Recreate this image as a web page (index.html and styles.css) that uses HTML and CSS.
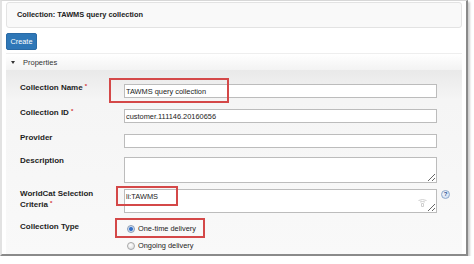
FILE: index.html
```html
<!DOCTYPE html>
<html lang="en">
  <head>
    <meta charset="UTF-8" />
    <meta name="viewport" content="width=device-width, initial-scale=1.0" />
    <title>Collection: TAWMS query collection</title>
    <link rel="stylesheet" href="styles.css">
  </head>
  <body>
    <div class="frame">
      <div class="page-header">Collection: TAWMS query collection</div>
      <button class="btn-create">Create</button>

      <!-- Properties section -->
      <div class="section-title"><span class="caret"></span>Properties</div>
      <div class="section-body">
        <div class="row">
          <label class="field-label">Collection Name<span class="req">*</span></label>
          <input class="field" type="text" value="TAWMS query collection" />
        </div>
        <div class="row">
          <label class="field-label">Collection ID<span class="req">*</span></label>
          <input class="field" type="text" value="customer.111146.20160656" />
        </div>
        <div class="row row-provider">
          <label class="field-label">Provider</label>
          <input class="field" type="text" value="" />
        </div>
        <div class="row row-desc">
          <label class="field-label">Description</label>
          <textarea class="field area-desc"></textarea>
        </div>
        <div class="row row-criteria">
          <label class="field-label">WorldCat Selection<br />Criteria<span class="req">*</span></label>
          <span class="area-wrap">
            <textarea class="field area-criteria">li:TAWMS</textarea>
            <svg class="filter-icon" width="9" height="8" viewBox="0 0 9 8">
              <path d="M0.5 1.5 Q4.5 -0.5 8.5 1.5 M2 3 Q4.5 2 7 3 M3.5 4.5 L3.5 7.5 L5.5 7.5 L5.5 4.5 Z" fill="none" stroke="#cfcfcf" stroke-width="1"/>
            </svg>
          </span>
          <span class="help">?</span>
        </div>
        <div class="row row-type">
          <label class="field-label">Collection Type</label>
          <div class="options">
            <label class="option"><input type="radio" name="ctype" checked />One-time delivery</label>
            <label class="option"><input type="radio" name="ctype" />Ongoing delivery</label>
          </div>
        </div>
      </div>

      <!-- callout boxes -->
      <div class="callout callout-name"></div>
      <div class="callout callout-criteria"></div>
      <div class="callout callout-type"></div>
    </div>
  </body>
</html>
```

FILE: styles.css
```css
body {
  margin: 0;
  background: #fff;
  font-family: "Liberation Sans", Arial, sans-serif;
  color: #222;
}
.frame {
  position: relative;
  box-sizing: border-box;
  width: 468px;
  height: 256px;
  padding: 1px 4px 0 4px;
  border-top: 1px solid #d8d8d8;
  border-left: 2px solid #e2e2e2;
  border-right: 2px solid #8a8a8a;
  border-bottom: 2px solid #8a8a8a;
  box-shadow: 2px 2px 2px rgba(0, 0, 0, 0.2);
  background: #fff;
  overflow: hidden;
}
.page-header {
  box-sizing: border-box;
  width: 100%;
  height: 26px;
  line-height: 24px;
  padding-left: 10px;
  background: #f9f9f9;
  border: 1px solid #e3e3e3;
  border-radius: 3px;
  font-size: 7.4px;
  font-weight: bold;
}
.btn-create {
  display: block;
  box-sizing: border-box;
  margin-top: 5px;
  width: 31px;
  height: 17px;
  padding: 0;
  background: #2e77b7;
  border: 1px solid #2a6aa5;
  border-radius: 2px;
  color: #fff;
  font-family: inherit;
  font-size: 7.3px;
}
.section-title {
  box-sizing: border-box;
  margin-top: 3px;
  width: 100%;
  height: 17px;
  display: flex;
  align-items: center;
  padding-left: 5px;
  border-top: 1px solid #eee;
  background: linear-gradient(#fff, #f3f3f3);
  font-size: 7.5px;
  color: #333;
}
.caret {
  width: 0;
  height: 0;
  margin-right: 8px;
  border-left: 2px solid transparent;
  border-right: 2px solid transparent;
  border-top: 3px solid #333;
}
.section-body {
  box-sizing: border-box;
  width: 100%;
  height: 184px;
  padding: 14px 0 0 14px;
  background: linear-gradient(#e9e9e9, #f5f5f5 30px, #f9f9f9);
}
.row {
  display: flex;
  align-items: flex-start;
  margin-bottom: 11px;
}
.row-provider {
  margin-bottom: 9px;
}
.row-desc {
  margin-bottom: 6px;
}
.row-criteria {
  margin-bottom: 10px;
}
.field-label {
  width: 104px;
  flex-shrink: 0;
  margin-top: -1px;
  font-size: 8px;
  line-height: 10px;
  font-weight: bold;
  color: #1e1e1e;
}
.row-criteria .field-label {
  line-height: 11px;
}
.req {
  display: inline-block;
  position: relative;
  top: -2px;
  margin-left: 2px;
  color: #d03030;
  font-size: 6px;
  line-height: 6px;
}
.field {
  box-sizing: border-box;
  width: 313px;
  height: 14px;
  margin: 0;
  padding: 0 1px;
  border: 1px solid #bcbcbc;
  border-radius: 0;
  background: #fff;
  font-family: inherit;
  font-size: 7.4px;
  color: #222;
  outline: none;
}
textarea.field {
  display: block;
  padding: 2px 1px;
  resize: both;
}
.area-desc {
  height: 26px;
}
.area-wrap {
  position: relative;
  display: block;
  width: 313px;
  height: 24px;
}
.area-criteria {
  height: 24px;
}
.filter-icon {
  position: absolute;
  right: 10px;
  top: 10px;
}
.help {
  box-sizing: border-box;
  width: 9px;
  height: 9px;
  margin: 1px 0 0 4px;
  border-radius: 50%;
  border: 1px solid #8fa9cc;
  background: radial-gradient(circle at 40% 35%, #f4f8fd, #c9d9ee);
  color: #2a4f8f;
  font-size: 6px;
  font-weight: bold;
  line-height: 7px;
  text-align: center;
}
.options {
  display: flex;
  flex-direction: column;
  gap: 6px;
}
.option {
  display: flex;
  align-items: center;
  height: 11px;
  font-size: 7.4px;
  color: #222;
}
.option input {
  appearance: none;
  -webkit-appearance: none;
  box-sizing: border-box;
  width: 8px;
  height: 8px;
  margin: 0 3px 0 3px;
  border-radius: 50%;
  border: 1px solid #a8a8a8;
  background: radial-gradient(circle at 40% 35%, #fff, #d8d8d8);
}
.option input:checked {
  border-color: #8a9bb3;
  background: radial-gradient(circle, #2e63b8 0, #3d7ad0 1.6px, #cfdcee 2.4px, #e8eef7);
}
.callout {
  position: absolute;
  box-sizing: border-box;
  border: 2px solid #d44848;
}
.callout-name {
  left: 107px;
  top: 77px;
  width: 120px;
  height: 25px;
}
.callout-criteria {
  left: 114px;
  top: 185px;
  width: 62px;
  height: 20px;
}
.callout-type {
  left: 113px;
  top: 217px;
  width: 90px;
  height: 20px;
}
```
